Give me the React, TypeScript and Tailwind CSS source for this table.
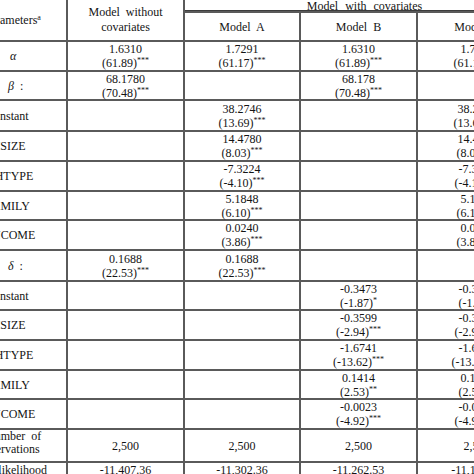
import React from 'react'

type Est = [string, string, string]
type Val = Est | string | null

interface Row {
  label: React.ReactNode
  cells: Val[]
}

const S = '***'

// rows below the header, Weibull part first, then the decay part
const rows: Row[] = [
  {
    label: <span className="pl-[10px]"><i>α</i></span>,
    cells: [['1.6310', '(61.89)', S], ['1.7291', '(61.17)', S], ['1.6310', '(61.89)', S], ['1.7291', '(61.17)', S]],
  },
  {
    label: <span className="pl-[8px]"><i>β</i> :</span>,
    cells: [['68.1780', '(70.48)', S], null, ['68.178', '(70.48)', S], null],
  },
  {
    label: <span className="-ml-[14px]">Constant</span>,
    cells: [null, ['38.2746', '(13.69)', S], null, ['38.2746', '(13.69)', S]],
  },
  {
    label: <span className="-ml-[17px]">HHSIZE</span>,
    cells: [null, ['14.4780', '(8.03)', S], null, ['14.4780', '(8.03)', S]],
  },
  {
    label: <span className="-ml-[14px]">HHTYPE</span>,
    cells: [null, ['-7.3224', '(-4.10)', S], null, ['-7.3224', '(-4.10)', S]],
  },
  {
    label: <span className="-ml-[14px]">FAMILY</span>,
    cells: [null, ['5.1848', '(6.10)', S], null, ['5.1848', '(6.10)', S]],
  },
  {
    label: <span className="-ml-[12px]">INCOME</span>,
    cells: [null, ['0.0240', '(3.86)', S], null, ['0.0240', '(3.86)', S]],
  },
  {
    label: <span className="pl-[8px]"><i>δ</i> :</span>,
    cells: [['0.1688', '(22.53)', S], ['0.1688', '(22.53)', S], null, null],
  },
  {
    label: <span className="-ml-[14px]">Constant</span>,
    cells: [null, null, ['-0.3473', '(-1.87)', '*'], ['-0.3473', '(-1.87)', '*']],
  },
  {
    label: <span className="-ml-[17px]">HHSIZE</span>,
    cells: [null, null, ['-0.3599', '(-2.94)', S], ['-0.3599', '(-2.94)', S]],
  },
  {
    label: <span className="-ml-[14px]">HHTYPE</span>,
    cells: [null, null, ['-1.6741', '(-13.62)', S], ['-1.6741', '(-13.62)', S]],
  },
  {
    label: <span className="-ml-[14px]">FAMILY</span>,
    cells: [null, null, ['0.1414', '(2.53)', '**'], ['0.1414', '(2.53)', '**']],
  },
  {
    label: <span className="-ml-[12px]">INCOME</span>,
    cells: [null, null, ['-0.0023', '(-4.92)', S], ['-0.0023', '(-4.92)', S]],
  },
  {
    label: (
      <span className="-ml-[14px] -mt-[5px] flex flex-col leading-[13px]">
        <span>Number of</span>
        <span className="-ml-[7px]">observations</span>
      </span>
    ),
    cells: ['2,500', '2,500', '2,500', '2,500'],
  },
  {
    label: <span className="-ml-[27px]">Log likelihood</span>,
    cells: ['-11,407.36', '-11,302.36', '-11,262.53', '-11,157.53'],
  },
]

function Cell({ v }: { v: Val }) {
  if (v === null) return <div className="bg-white" />
  if (typeof v === 'string') {
    return <div className="bg-white flex items-center justify-center whitespace-nowrap">{v}</div>
  }
  return (
    <div className="bg-white flex flex-col items-center justify-center leading-[14px] whitespace-nowrap">
      <span>{v[0]}</span>
      <span>
        {v[1]}
        <sup className="text-[8px]">{v[2]}</sup>
      </span>
    </div>
  )
}

export default function App() {
  return (
    <div className="w-[474px] h-[474px] overflow-hidden bg-white">
      <div
        className="grid grid-cols-[66px_115px_114px_115px_118px] grid-rows-[11px_27px_28px_27px_29px_28px_28px_27px_28px_29px_27px_28px_28px_27px_28px_31px_13px] gap-[2px] bg-[#5a5a5a] w-[536px] text-[12px] text-[#141414] [word-spacing:3px]"
        style={{ fontFamily: '"Liberation Serif", "Times New Roman", serif' }}
      >
        {/* header */}
        <div className="row-span-2 bg-white flex items-center whitespace-nowrap">
          <span className="-ml-[16px]">
            Parameters<sup className="text-[8px]">a</sup>
          </span>
        </div>
        <div className="row-span-2 bg-white flex flex-col items-center justify-center leading-[15px]">
          <span>Model without</span>
          <span>covariates</span>
        </div>
        <div className="col-span-3 bg-white border-b border-[#3c3c3c] flex justify-center leading-[11px] pt-[1px] whitespace-nowrap [word-spacing:4px]">
          <span className="pl-[8px]">Model with covariates</span>
        </div>
        <div className="bg-white flex items-center justify-center">Model A</div>
        <div className="bg-white flex items-center justify-center">Model B</div>
        <div className="bg-white flex items-center justify-center">Model C</div>

        {rows.map((r, i) => (
          <React.Fragment key={i}>
            <div className="bg-white flex items-center whitespace-nowrap">{r.label}</div>
            {r.cells.map((c, j) => (
              <Cell key={j} v={c} />
            ))}
          </React.Fragment>
        ))}
      </div>
    </div>
  )
}
